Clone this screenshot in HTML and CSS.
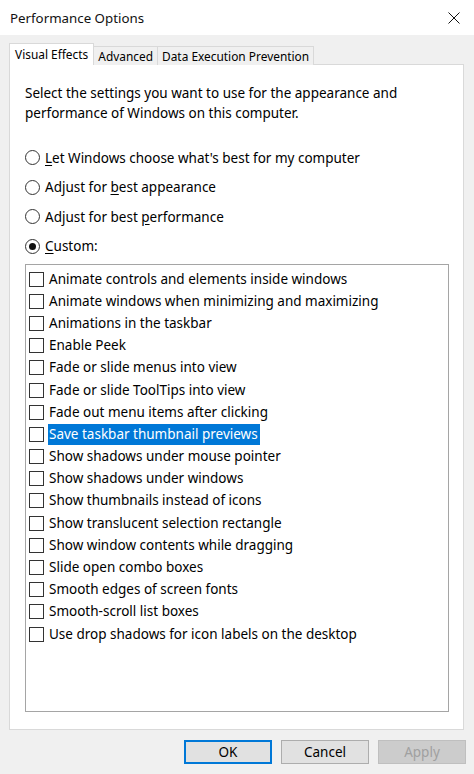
FILE: index.html
```html
<!DOCTYPE html>
<html lang="en">
<head>
  <meta charset="UTF-8">
  <title>Performance Options</title>
  <link rel="stylesheet" href="styles.css">
</head>
<body>

<div class="window">
  <header class="titlebar">
    <span class="title">Performance Options</span>
    <svg class="close" width="12" height="12" viewBox="0 0 12 12">
      <path d="M0.5 0.5 L11.5 11.5 M11.5 0.5 L0.5 11.5" stroke="#111" stroke-width="1" fill="none"/>
    </svg>
  </header>

  <div class="tabs">
    <div class="tab active">Visual Effects</div>
    <div class="tab">Advanced</div>
    <div class="tab">Data Execution Prevention</div>
  </div>

  <div class="panel">
    <p class="intro">Select the settings you want to use for the appearance and performance of Windows on this computer.</p>

    <div class="radios">
      <label class="radio"><span class="dot"></span><span><u>L</u>et Windows choose what's best for my computer</span></label>
      <label class="radio"><span class="dot"></span><span>Adjust for <u>b</u>est appearance</span></label>
      <label class="radio"><span class="dot"></span><span>Adjust for best <u>p</u>erformance</span></label>
      <label class="radio checked"><span class="dot"></span><span><u>C</u>ustom:</span></label>
    </div>

    <ul class="listbox">
      <li><span class="box"></span><span class="text">Animate controls and elements inside windows</span></li>
      <li><span class="box"></span><span class="text">Animate windows when minimizing and maximizing</span></li>
      <li><span class="box"></span><span class="text">Animations in the taskbar</span></li>
      <li><span class="box"></span><span class="text">Enable Peek</span></li>
      <li><span class="box"></span><span class="text">Fade or slide menus into view</span></li>
      <li><span class="box"></span><span class="text">Fade or slide ToolTips into view</span></li>
      <li><span class="box"></span><span class="text">Fade out menu items after clicking</span></li>
      <li class="selected"><span class="box"></span><span class="text">Save taskbar thumbnail previews</span></li>
      <li><span class="box"></span><span class="text">Show shadows under mouse pointer</span></li>
      <li><span class="box"></span><span class="text">Show shadows under windows</span></li>
      <li><span class="box"></span><span class="text">Show thumbnails instead of icons</span></li>
      <li><span class="box"></span><span class="text">Show translucent selection rectangle</span></li>
      <li><span class="box"></span><span class="text">Show window contents while dragging</span></li>
      <li><span class="box"></span><span class="text">Slide open combo boxes</span></li>
      <li><span class="box"></span><span class="text">Smooth edges of screen fonts</span></li>
      <li><span class="box"></span><span class="text">Smooth-scroll list boxes</span></li>
      <li><span class="box"></span><span class="text">Use drop shadows for icon labels on the desktop</span></li>
    </ul>
  </div>

  <div class="buttons">
    <button class="btn default">OK</button>
    <button class="btn">Cancel</button>
    <button class="btn" disabled>Apply</button>
  </div>
</div>

</body>
</html>
```

FILE: styles.css
```css
* {
  box-sizing: border-box;
}

body {
  margin: 0;
  font-family: 'Noto Sans', sans-serif;
  font-size: 13.5px;
  color: #000;
  background: #f0f0f0;
}

.window {
  width: 474px;
  height: 774px;
  background: #f0f0f0;
}

.titlebar {
  height: 35px;
  background: #fff;
  display: flex;
  align-items: center;
  justify-content: space-between;
  padding: 0 14px 0 10px;
}

.title {
  font-size: 13.3px;
  color: #111;
}

/* tab strip */
.tabs {
  display: flex;
  align-items: flex-end;
  margin: 8px 0 -1px 9px;
  height: 22px;
}

.tab {
  height: 19px;
  padding: 0 4px;
  border: 1px solid #d9d9d9;
  border-bottom: none;
  margin-left: -1px;
  font-size: 11.9px;
  line-height: 18px;
  background: #f0f0f0;
}

.tab.active {
  height: 22px;
  margin-left: 0;
  padding: 0 5px;
  background: #fff;
  position: relative;
  z-index: 1;
  line-height: 20px;
}

.panel {
  height: 666px;
  margin: 0 10px 0 9px;
  background: #fff;
  border: 1px solid #d9d9d9;
  padding: 18px 14px 0 15px;
}

.intro {
  margin: 0;
  line-height: 20px;
}

/* option buttons */
.radios {
  margin-top: 20px;
}

.radio {
  display: flex;
  align-items: center;
  height: 29.5px;
}

.radio .dot {
  width: 15px;
  height: 15px;
  border: 1px solid #333;
  border-radius: 50%;
  margin-right: 5px;
  display: flex;
  align-items: center;
  justify-content: center;
}

.radio.checked .dot::after {
  content: '';
  width: 7px;
  height: 7px;
  border-radius: 50%;
  background: #111;
}

u {
  text-decoration-thickness: 1px;
  text-underline-offset: 2px;
}

/* checkbox list */
.listbox {
  list-style: none;
  margin: 3px 0 0 0;
  padding: 3px 0 0 0;
  width: 424px;
  height: 448px;
  border: 1px solid #a5a5a5;
}

.listbox li {
  display: flex;
  align-items: center;
  height: 22.2px;
}

.listbox .box {
  width: 15px;
  height: 15px;
  border: 1px solid #333;
  margin: 0 4px 0 3px;
  flex-shrink: 0;
}

.listbox .text {
  padding: 0 2px 0 1px;
  line-height: 21px;
}

.listbox .selected .text {
  background: #0078d7;
  color: #fff;
}

/* dialog buttons */
.buttons {
  display: flex;
  justify-content: flex-end;
  gap: 9px;
  margin: 10px 8px 0 0;
}

.btn {
  width: 88px;
  height: 24px;
  font-family: inherit;
  font-size: 13.5px;
  background: #e1e1e1;
  border: 1px solid #adadad;
  color: #000;
  padding: 0;
}

.btn.default {
  border: 2px solid #0078d7;
}

.btn:disabled {
  background: #cccccc;
  border-color: #bfbfbf;
  color: #a0a0a0;
}
```
